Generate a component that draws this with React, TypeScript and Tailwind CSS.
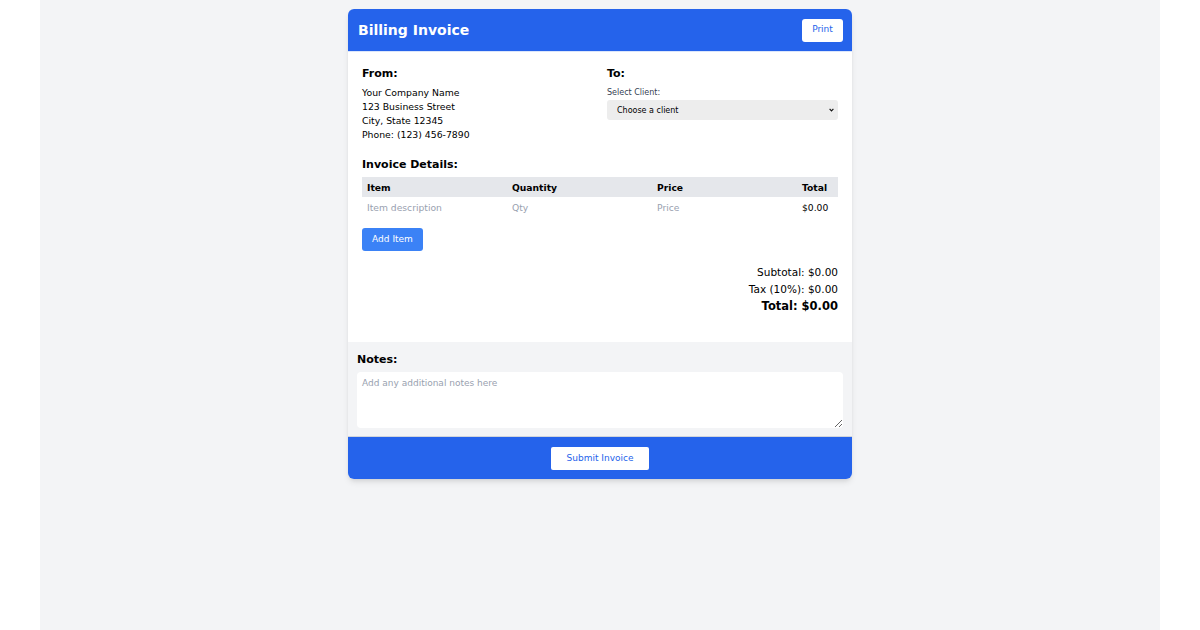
import { useState } from 'react';

const font = { fontFamily: '"DejaVu Sans", sans-serif' };

export default function App() {
  const [client, setClient] = useState('');
  const [notes, setNotes] = useState('');

  return (
    <div className="bg-white min-h-[630px]" style={font}>
      <div className="mx-10 bg-gray-100 min-h-[630px] pt-[9px]">
        <div className="w-[504px] mx-auto bg-white rounded-md shadow-md overflow-hidden">
          {/* Header */}
          <div className="bg-[#2563eb] h-[43px] pl-[10px] pr-[9px] flex items-center justify-between border-b border-[#dbe6fb]">
            <h1 className="text-white font-bold text-[14px]">Billing Invoice</h1>
            <button className="bg-white text-[#2563eb] text-[9px] rounded-[3px] w-[41px] h-[23px]">Print</button>
          </div>

          {/* Body */}
          <div className="px-[14px] pt-[14px] pb-[27px]">
            <div className="grid grid-cols-2 gap-[14px]">
              <div>
                <h2 className="font-bold text-[11px] leading-[16px] mb-[4px]">From:</h2>
                <div className="text-[9.3px] leading-[14px]">
                  <p>Your Company Name</p>
                  <p>123 Business Street</p>
                  <p>City, State 12345</p>
                  <p>Phone: (123) 456-7890</p>
                </div>
              </div>
              <div className="flex flex-col">
                <h2 className="font-bold text-[11px] leading-[16px] mb-[4px]">To:</h2>
                <label className="block text-[8px] leading-[12px] text-gray-700 mt-[1px] mb-[1px]">Select Client:</label>
                <div className="relative">
                  <select
                    value={client}
                    onChange={e => setClient(e.target.value)}
                    className="appearance-none block w-full h-[20px] bg-[#ededed] rounded-[3px] text-[8px] pt-[2px] px-[10px] outline-none"
                  >
                    <option value="">Choose a client</option>
                    <option value="1">Acme Corp</option>
                    <option value="2">Globex Inc</option>
                  </select>
                  <svg
                    className="absolute right-[4px] top-[8px] pointer-events-none"
                    width="5"
                    height="4"
                    viewBox="0 0 5 4"
                  >
                    <path d="M0.6 0.8 L2.5 2.9 L4.4 0.8" fill="none" stroke="#111" strokeWidth="1.1" />
                  </svg>
                </div>
              </div>
            </div>

            <h2 className="font-bold text-[11px] leading-[16px] mt-[15px] mb-[4px]">Invoice Details:</h2>
            <table className="w-full text-[9.2px] table-fixed">
              <thead>
                <tr className="bg-gray-200 h-[20px]">
                  <th className="text-left font-bold px-[5px] pt-[1px] w-[145px]">Item</th>
                  <th className="text-left font-bold px-[5px] pt-[1px] w-[145px]">Quantity</th>
                  <th className="text-left font-bold px-[5px] pt-[1px] w-[145px]">Price</th>
                  <th className="text-right font-bold pl-[5px] pr-[11px] pt-[1px]">Total</th>
                </tr>
              </thead>
              <tbody>
                <tr className="h-[22px]">
                  <td className="px-[5px]">
                    <input className="w-full outline-none placeholder:text-gray-400" placeholder="Item description" />
                  </td>
                  <td className="px-[5px]">
                    <input className="w-full outline-none placeholder:text-gray-400" placeholder="Qty" />
                  </td>
                  <td className="px-[5px]">
                    <input className="w-full outline-none placeholder:text-gray-400" placeholder="Price" />
                  </td>
                  <td className="pl-[5px] pr-[11px] text-right">$0.00</td>
                </tr>
              </tbody>
            </table>

            <button className="mt-[9px] bg-[#3b82f6] text-white text-[9px] rounded-[3px] w-[61px] h-[23px]">Add Item</button>

            <div className="mt-[13px] text-right text-[10.5px] leading-[17px]">
              <p>Subtotal: $0.00</p>
              <p>Tax (10%): $0.00</p>
              <p className="font-bold text-[11.5px]">Total: $0.00</p>
            </div>
          </div>

          {/* Notes */}
          <div className="bg-gray-100 px-[9px] pt-[10px] pb-[8px]">
            <h2 className="font-bold text-[11px] leading-[16px] mb-[4px]">Notes:</h2>
            <textarea
              value={notes}
              onChange={e => setNotes(e.target.value)}
              placeholder="Add any additional notes here"
              className="block w-full h-[56px] bg-white rounded-[4px] text-[9px] px-[5px] pt-[5px] pb-[3px] outline-none placeholder:text-gray-400"
            />
          </div>

          {/* Footer */}
          <div className="bg-[#2563eb] h-[43px] flex items-center justify-center border-t border-gray-300">
            <button className="bg-white text-[#2563eb] text-[9px] rounded-[2px] w-[98px] h-[23px] pt-[1px]">Submit Invoice</button>
          </div>
        </div>
      </div>
    </div>
  );
}
